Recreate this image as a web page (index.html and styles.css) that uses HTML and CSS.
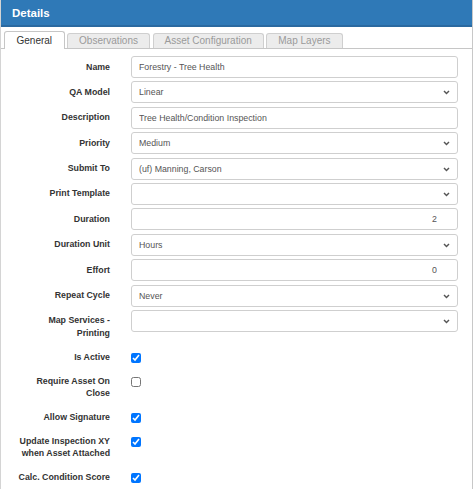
FILE: index.html
```html
<!DOCTYPE html>
<html>
<head>
<meta charset="utf-8">
<link rel="stylesheet" href="styles.css">
</head>
<body>
<div class="panel">
  <div class="header">Details</div>
  <div class="tabs">
    <div class="tab active">General</div>
    <div class="tab">Observations</div>
    <div class="tab">Asset Configuration</div>
    <div class="tab">Map Layers</div>
  </div>
  <div class="form">
    <div class="row"><label class="lbl">Name</label><input class="ctl" type="text" value="Forestry - Tree Health"></div>
    <div class="row"><label class="lbl">QA Model</label><div class="sel"><select class="ctl"><option>Linear</option></select><svg class="chev" width="7" height="5" viewBox="0 0 7 5"><polyline points="1,1 3.5,3.6 6,1"/></svg></div></div>
    <div class="row"><label class="lbl">Description</label><input class="ctl" type="text" value="Tree Health/Condition Inspection"></div>
    <div class="row"><label class="lbl">Priority</label><div class="sel"><select class="ctl"><option>Medium</option></select><svg class="chev" width="7" height="5" viewBox="0 0 7 5"><polyline points="1,1 3.5,3.6 6,1"/></svg></div></div>
    <div class="row"><label class="lbl">Submit To</label><div class="sel"><select class="ctl"><option>(uf) Manning, Carson</option></select><svg class="chev" width="7" height="5" viewBox="0 0 7 5"><polyline points="1,1 3.5,3.6 6,1"/></svg></div></div>
    <div class="row"><label class="lbl">Print Template</label><div class="sel"><select class="ctl"><option></option></select><svg class="chev" width="7" height="5" viewBox="0 0 7 5"><polyline points="1,1 3.5,3.6 6,1"/></svg></div></div>
    <div class="row"><label class="lbl">Duration</label><input class="ctl num" type="text" value="2"></div>
    <div class="row"><label class="lbl">Duration Unit</label><div class="sel"><select class="ctl"><option>Hours</option></select><svg class="chev" width="7" height="5" viewBox="0 0 7 5"><polyline points="1,1 3.5,3.6 6,1"/></svg></div></div>
    <div class="row"><label class="lbl">Effort</label><input class="ctl num" type="text" value="0"></div>
    <div class="row"><label class="lbl">Repeat Cycle</label><div class="sel"><select class="ctl"><option>Never</option></select><svg class="chev" width="7" height="5" viewBox="0 0 7 5"><polyline points="1,1 3.5,3.6 6,1"/></svg></div></div>
    <div class="row"><label class="lbl">Map Services - Printing</label><div class="sel"><select class="ctl"><option></option></select><svg class="chev" width="7" height="5" viewBox="0 0 7 5"><polyline points="1,1 3.5,3.6 6,1"/></svg></div></div>
    <div class="checks">
      <div class="crow"><label class="clbl">Is Active</label><input class="cb" type="checkbox" checked></div>
      <div class="crow"><label class="clbl">Require Asset On Close</label><input class="cb" type="checkbox"></div>
      <div class="crow"><label class="clbl">Allow Signature</label><input class="cb" type="checkbox" checked></div>
      <div class="crow"><label class="clbl">Update Inspection XY when Asset Attached</label><input class="cb" type="checkbox" checked></div>
      <div class="crow"><label class="clbl">Calc. Condition Score</label><input class="cb" type="checkbox" checked></div>
    </div>
  </div>
</div>
</body>
</html>
```
FILE: styles.css
```css
html, body {
  margin: 0;
  padding: 0;
  background: #fff;
  overflow: hidden;
}
body {
  font-family: "Liberation Sans", Arial, sans-serif;
  color: #333;
}
.panel {
  width: 473px;
  height: 489px;
  box-sizing: border-box;
  border-left: 1px solid #d4d4d4;
  border-right: 1px solid #c8c8c8;
}
.header {
  height: 25px;
  background: #2f79b7;
  border-bottom: 2px solid #2a69a0;
  color: #fff;
  font-weight: bold;
  font-size: 11.5px;
  line-height: 26px;
  padding-left: 11px;
}
.tabs {
  display: flex;
  align-items: flex-end;
  gap: 2.5px;
  margin-top: 5px;
  padding-left: 3px;
  height: 16px;
  border-bottom: 1px solid #c6c6c6;
}
.tab {
  font-size: 10px;
  color: #9a9a9a;
  background: #ececec;
  border: 1px solid #cfcfcf;
  border-bottom: none;
  border-radius: 3px 3px 0 0;
  padding: 0 11px;
  height: 14px;
  line-height: 14px;
}
.tab.active {
  color: #333;
  background: #fff;
  border-color: #c6c6c6;
  height: 16px;
  line-height: 17px;
  margin-bottom: -1px;
  padding: 0 11.5px 1px;
}
.form {
  padding-top: 7px;
}
.row {
  display: flex;
  align-items: flex-start;
  margin-bottom: 3.4px;
}
.lbl, .clbl {
  width: 92px;
  margin-left: 17px;
  margin-right: 21px;
  text-align: right;
  font-weight: bold;
  font-size: 8.8px;
  color: #333;
  flex: none;
}
.lbl {
  padding-top: 4.5px;
  line-height: 12.5px;
}
.ctl {
  width: 327px;
  height: 22px;
  box-sizing: border-box;
  border: 1px solid #cfcfcf;
  border-radius: 3px;
  background: #fff;
  font-family: "Liberation Sans", Arial, sans-serif;
  font-size: 8.8px;
  color: #555;
  padding: 0 7px;
  margin: 0;
  flex: none;
  outline: none;
}
.sel {
  position: relative;
  width: 327px;
  height: 22px;
  flex: none;
}
select.ctl {
  appearance: none;
  -webkit-appearance: none;
  display: block;
  padding-left: 7px;
}
.chev {
  position: absolute;
  right: 8px;
  top: 9px;
  fill: none;
  stroke: #555;
  stroke-width: 1.4;
}
.num {
  text-align: right;
  padding-right: 20px;
}
.checks {
  margin-top: 6px;
}
.crow {
  display: flex;
  align-items: flex-start;
  padding: 6px 0;
}
.clbl {
  line-height: 12px;
}
.cb {
  width: 10px;
  height: 10px;
  margin: 2px 0 0 0;
  flex: none;
}
```
